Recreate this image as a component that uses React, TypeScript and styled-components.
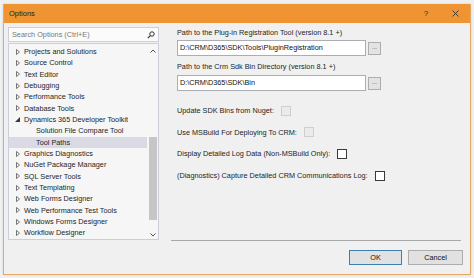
import React from 'react';
import styled, { createGlobalStyle } from 'styled-components';

const GlobalStyle = createGlobalStyle`
  html, body { margin: 0; padding: 0; }
  body {
    background: #eef0f2;
    font-family: "Liberation Sans", Arial, sans-serif;
    overflow: hidden;
  }
`;

// --- layout ---

const Screen = styled.div`
  width: 474px;
  height: 278px;
  padding: 4px 0 0 3px;
  box-sizing: border-box;
`;

const Dialog = styled.div`
  width: 468px;
  height: 271px;
  box-sizing: border-box;
  border: 1px solid #e6a865;
  border-top: none;
  background: #f0f0f0;
  display: flex;
  flex-direction: column;
  box-shadow: 0 0 2px rgba(0, 0, 0, 0.12);
`;

const TitleBar = styled.div`
  height: 19px;
  flex-shrink: 0;
  background: #f09433;
  display: flex;
  align-items: center;
  padding-left: 5px;
  font-size: 7.5px;
  color: #1c1c1c;
`;

const TitleText = styled.span`
  flex: 1;
`;

const TitleButton = styled.div<{ $w: number }>`
  width: ${p => p.$w}px;
  height: 19px;
  display: flex;
  align-items: center;
  justify-content: center;
  font-size: 8px;
  color: #2a2a2a;
`;

const Body = styled.div`
  flex: 1;
  display: flex;
  padding: 4px 7px 10px 4px;
`;

const LeftCol = styled.div`
  width: 151px;
  height: 213px;
  display: flex;
  flex-direction: column;
  gap: 1px;
`;

const SearchBox = styled.div`
  height: 15px;
  box-sizing: border-box;
  border: 1px solid #cccedb;
  background: #fbfbfb;
  display: flex;
  align-items: center;
  padding: 0 3px 0 3px;
  font-size: 7.3px;
  color: #777;
`;

const SearchText = styled.span`
  flex: 1;
`;

const Tree = styled.div`
  flex: 1;
  border: 1px solid #cccedb;
  background: #f6f6f6;
  display: flex;
  overflow: hidden;
`;

const TreeList = styled.div`
  flex: 1;
  padding-top: 2px;
  overflow: hidden;
`;

const TreeRow = styled.div<{ $indent: number; $selected?: boolean }>`
  height: 11.33px;
  display: flex;
  align-items: center;
  gap: 4px;
  padding-left: ${p => p.$indent}px;
  background: ${p => (p.$selected ? '#dadae4' : 'transparent')};
  font-size: 7.3px;
  color: #1e1e1e;
  white-space: nowrap;
`;

const Arrow = styled.span`
  width: 5px;
  display: flex;
  align-items: center;
  justify-content: center;
`;

const ScrollBar = styled.div`
  width: 11px;
  display: flex;
  flex-direction: column;
  align-items: center;
  padding: 5px 0 2px;
`;

const Thumb = styled.div`
  width: 8px;
  height: 83px;
  margin-top: 84px;
  background: #c6c6c6;
`;

const ScrollDown = styled.div`
  margin-top: auto;
  display: flex;
`;

const RightCol = styled.div`
  flex: 1;
  margin-left: 12px;
  display: flex;
  flex-direction: column;
`;

const Content = styled.div`
  height: 213px;
  padding-left: 6px;
  display: flex;
  flex-direction: column;
`;

const Label = styled.div<{ $top?: number }>`
  height: 11px;
  line-height: 11px;
  margin-top: ${p => p.$top ?? 0}px;
  font-size: 7.3px;
  color: #1e1e1e;
  white-space: nowrap;
`;

const FieldRow = styled.div<{ $top: number }>`
  margin-top: ${p => p.$top}px;
  display: flex;
  align-items: center;
  gap: 2px;
`;

const TextBox = styled.div`
  width: 189px;
  height: 16px;
  box-sizing: border-box;
  border: 1px solid #abadb3;
  background: #fff;
  padding: 0 2px;
  font-size: 7.3px;
  line-height: 14px;
  color: #111;
`;

const BrowseButton = styled.div`
  width: 13px;
  height: 13px;
  box-sizing: border-box;
  border: 1px solid #adadad;
  background: #e3e3e3;
  font-size: 6px;
  line-height: 8px;
  text-align: center;
  color: #333;
`;

const Checks = styled.div`
  margin-top: 14px;
  display: flex;
  flex-direction: column;
  gap: 10.7px;
`;

const CheckRow = styled.div`
  height: 11px;
  display: flex;
  align-items: center;
  gap: 7px;
  font-size: 7.3px;
  color: #1e1e1e;
  white-space: nowrap;
`;

const CheckBox = styled.span<{ $disabled?: boolean }>`
  width: 10px;
  height: 10px;
  box-sizing: border-box;
  border: 1px solid ${p => (p.$disabled ? '#cfcfcf' : '#3a3a3a')};
  background: ${p => (p.$disabled ? '#ebebeb' : '#fff')};
`;

const Separator = styled.div`
  height: 0;
  border-top: 1px solid #a8a8a8;
  margin-right: 2px;
`;

const Footer = styled.div`
  display: flex;
  justify-content: flex-end;
  gap: 6px;
  padding-top: 9px;
`;

const Button = styled.div<{ $w: number; $default?: boolean }>`
  width: ${p => p.$w}px;
  height: 15px;
  box-sizing: border-box;
  border: 1px solid ${p => (p.$default ? '#3c7fb1' : '#adadad')};
  background: #e1e1e1;
  font-size: 7.3px;
  line-height: 13px;
  text-align: center;
  color: #111;
`;

// --- icons ---

const Collapsed = () => (
  <svg width="4" height="6" viewBox="0 0 4 6">
    <path d="M0.5 0.5 L3.5 3 L0.5 5.5 Z" fill="none" stroke="#555" strokeWidth="0.8" />
  </svg>
);

const Expanded = () => (
  <svg width="5" height="5" viewBox="0 0 5 5">
    <path d="M5 0 L5 5 L0 5 Z" fill="#3a3a3a" />
  </svg>
);

const Chevron = ({ up }: { up?: boolean }) => (
  <svg width="6" height="4" viewBox="0 0 6 4">
    <path d={up ? 'M0.5 3.5 L3 1 L5.5 3.5' : 'M0.5 0.5 L3 3 L5.5 0.5'} fill="none" stroke="#555" strokeWidth="1" />
  </svg>
);

const Magnifier = () => (
  <svg width="8" height="8" viewBox="0 0 8 8">
    <circle cx="5" cy="3" r="2.2" fill="none" stroke="#333" strokeWidth="1" />
    <path d="M3.4 4.6 L0.8 7.2" stroke="#333" strokeWidth="1.2" />
  </svg>
);

const CloseIcon = () => (
  <svg width="7" height="7" viewBox="0 0 7 7">
    <path d="M0.5 0.5 L6.5 6.5 M6.5 0.5 L0.5 6.5" stroke="#333" strokeWidth="0.9" />
  </svg>
);

// --- data ---

type Node = { label: string; kind: 'collapsed' | 'expanded' | 'child'; selected?: boolean };

const nodes: Node[] = [
  { label: 'Projects and Solutions', kind: 'collapsed' },
  { label: 'Source Control', kind: 'collapsed' },
  { label: 'Text Editor', kind: 'collapsed' },
  { label: 'Debugging', kind: 'collapsed' },
  { label: 'Performance Tools', kind: 'collapsed' },
  { label: 'Database Tools', kind: 'collapsed' },
  { label: 'Dynamics 365 Developer Toolkit', kind: 'expanded' },
  { label: 'Solution File Compare Tool', kind: 'child' },
  { label: 'Tool Paths', kind: 'child', selected: true },
  { label: 'Graphics Diagnostics', kind: 'collapsed' },
  { label: 'NuGet Package Manager', kind: 'collapsed' },
  { label: 'SQL Server Tools', kind: 'collapsed' },
  { label: 'Text Templating', kind: 'collapsed' },
  { label: 'Web Forms Designer', kind: 'collapsed' },
  { label: 'Web Performance Test Tools', kind: 'collapsed' },
  { label: 'Windows Forms Designer', kind: 'collapsed' },
  { label: 'Workflow Designer', kind: 'collapsed' },
  { label: 'XAML Designer', kind: 'collapsed' },
];

const checks = [
  { label: 'Update SDK Bins from Nuget:', disabled: true },
  { label: 'Use MSBuild For Deploying To CRM:', disabled: true },
  { label: 'Display Detailed Log Data (Non-MSBuild Only):', disabled: false },
  { label: '(Diagnostics) Capture Detailed CRM Communications Log:', disabled: false },
];

const App: React.FC = () => {
  return (
    <>
      <GlobalStyle />
      <Screen>
        <Dialog>
          <TitleBar>
            <TitleText>Options</TitleText>
            <TitleButton $w={28}>?</TitleButton>
            <TitleButton $w={30}><CloseIcon /></TitleButton>
          </TitleBar>

          <Body>
            <LeftCol>
              <SearchBox>
                <SearchText>Search Options (Ctrl+E)</SearchText>
                <Magnifier />
              </SearchBox>
              <Tree>
                <TreeList>
                  {nodes.map(n =>
                    n.kind === 'child' ? (
                      <TreeRow key={n.label} $indent={27} $selected={n.selected}>
                        {n.label}
                      </TreeRow>
                    ) : (
                      <TreeRow key={n.label} $indent={6}>
                        <Arrow>{n.kind === 'expanded' ? <Expanded /> : <Collapsed />}</Arrow>
                        {n.label}
                      </TreeRow>
                    )
                  )}
                </TreeList>
                <ScrollBar>
                  <Chevron up />
                  <Thumb />
                  <ScrollDown><Chevron /></ScrollDown>
                </ScrollBar>
              </Tree>
            </LeftCol>

            <RightCol>
              <Content>
                <Label>Path to the Plug-in Registration Tool (version 8.1 +)</Label>
                <FieldRow $top={2}>
                  <TextBox>D:\CRM\D365\SDK\Tools\PluginRegistration</TextBox>
                  <BrowseButton>...</BrowseButton>
                </FieldRow>
                <Label $top={5}>Path to the Crm Sdk Bin Directory (version 8.1 +)</Label>
                <FieldRow $top={3}>
                  <TextBox>D:\CRM\D365\SDK\Bin</TextBox>
                  <BrowseButton>...</BrowseButton>
                </FieldRow>
                <Checks>
                  {checks.map(c => (
                    <CheckRow key={c.label}>
                      {c.label}
                      <CheckBox $disabled={c.disabled} />
                    </CheckRow>
                  ))}
                </Checks>
              </Content>
              <Separator />
              <Footer>
                <Button $w={53} $default>OK</Button>
                <Button $w={55}>Cancel</Button>
              </Footer>
            </RightCol>
          </Body>
        </Dialog>
      </Screen>
    </>
  );
};

export default App;
